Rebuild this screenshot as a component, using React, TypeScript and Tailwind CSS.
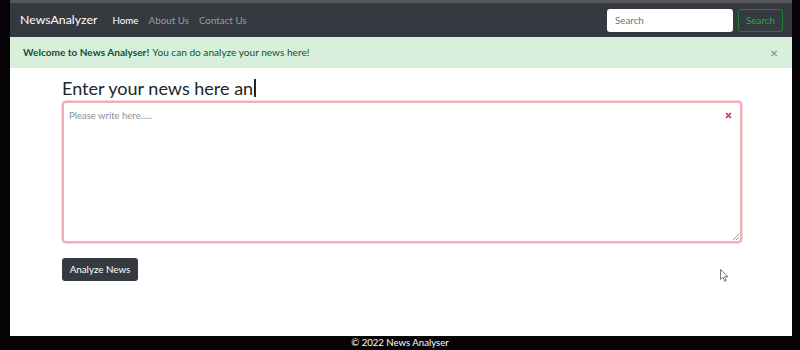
import React from "react";

export default function App() {
  const font = { fontFamily: "Lato, 'Noto Sans', sans-serif" };
  return (
    <div className="w-[800px] h-[350px] bg-[#050305] flex flex-col overflow-hidden" style={font}>
      <div className="flex-1 ml-[10px] mr-[8px] flex flex-col bg-white relative">
        <div className="h-[3px] bg-[#56565b]" />
        <nav className="h-[34px] bg-[#343a40] flex items-center pl-[10px] pr-[9px]">
          <span className="text-[12.3px] text-white mr-[15px]">NewsAnalyzer</span>
          <div className="flex gap-[10px] text-[9.8px]">
            <span className="text-white">Home</span>
            <span className="text-[#9a9da0]">About Us</span>
            <span className="text-[#9a9da0]">Contact Us</span>
          </div>
          <div className="ml-auto flex items-center gap-[5px]">
            <div className="w-[126px] h-[23px] bg-white rounded-[3px] flex items-center pl-[8px] text-[9.8px] text-[#6c757d]">
              Search
            </div>
            <div className="w-[45px] h-[23px] rounded-[3px] border border-[#1e7e34] flex items-center justify-center text-[9.8px] text-[#28a745]">
              Search
            </div>
          </div>
        </nav>
        <div className="h-[31px] bg-[#d8f0db] flex items-center pl-[13px] pr-[14px] text-[10.1px] text-[#0f5132]">
          <span className="font-bold mr-[3px]">Welcome to News Analyser!</span>
          <span>You can do analyze your news here!</span>
          <span className="ml-auto text-[14px] text-[#7a8a7f] leading-none">×</span>
        </div>
        <div className="pl-[52px] pr-[50px] pt-[9px] flex flex-col">
          <div className="flex items-center h-[22px]">
            <span className="text-[18px] text-[#212529] leading-none">Enter your news here an</span>
            <span className="w-[1.5px] h-[18px] bg-[#212529] ml-[1px]" />
          </div>
          <div className="mt-[2px] h-[142px] rounded-[4px] border-2 border-[#f1aeb5] shadow-[0_0_0_1px_#f8d7da] relative">
            <div className="pl-[5px] pt-[6px] text-[9.5px] text-[#8a8f94]">Please write here.....</div>
            <svg className="absolute right-[8px] top-[9px]" width="7" height="7" viewBox="0 0 7 7">
              <path d="M1 1L6 6M6 1L1 6" stroke="#c0394b" strokeWidth="1.6" />
            </svg>
            <svg className="absolute right-[1px] bottom-[1px]" width="6" height="6" viewBox="0 0 6 6">
              <path d="M0 6L6 0M3 6L6 3" stroke="#888" strokeWidth="0.8" />
            </svg>
          </div>
          <div className="mt-[15px] flex">
            <div className="flex items-center justify-center w-[76px] h-[23px] bg-[#343a40] rounded-[3px] text-white text-[9.8px]">
              Analyze News
            </div>
          </div>
        </div>
        <svg className="absolute left-[710px] top-[269px]" width="9" height="13" viewBox="0 0 9 13">
          <path d="M0.5 0.5L0.5 10.5L3 8.2L4.8 12.3L6.3 11.6L4.6 7.7L8 7.7Z" fill="white" stroke="#555" strokeWidth="0.8" />
        </svg>
      </div>
      <div className="h-[14px] flex items-center justify-center text-white text-[9.6px] leading-none">
        © 2022 News Analyser
      </div>
    </div>
  );
}
